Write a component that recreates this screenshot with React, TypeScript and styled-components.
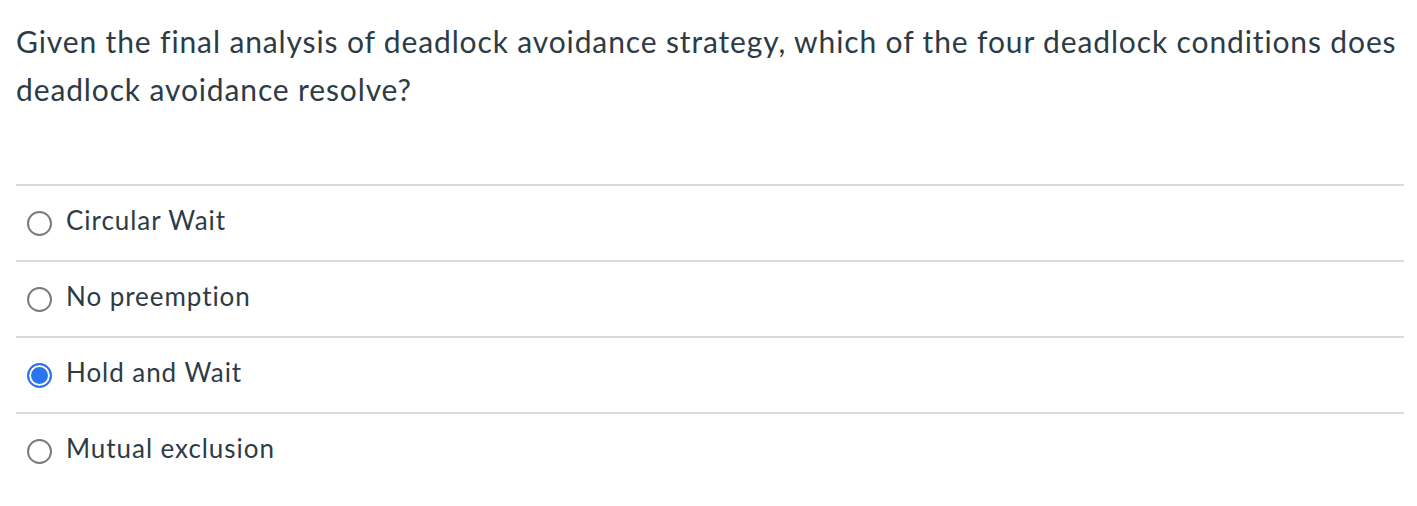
import * as React from "react";
import styled, { createGlobalStyle } from "styled-components";

const GlobalStyle = createGlobalStyle`
  html, body {
    margin: 0;
    padding: 0;
    background: #ffffff;
  }
  body {
    font-family: Lato, "Noto Sans", "Liberation Sans", sans-serif;
    color: #2d3b45;
  }
`;

const Quiz = styled.div`
  padding: 17px 13px 0 16px;
`;

const Question = styled.p`
  margin: 0 0 71px 0;
  font-size: 30px;
  line-height: 48px;
  letter-spacing: 0.87px;
`;

const Answers = styled.div`
  display: flex;
  flex-direction: column;
`;

const Answer = styled.label`
  display: flex;
  align-items: center;
  gap: 14px;
  height: 76px;
  padding: 0 0 6px 11px;
  box-sizing: border-box;
  border-top: 2px solid #dadada;
  font-size: 26px;
  letter-spacing: 0.95px;
  cursor: pointer;
`;

const Radio = styled.span<{ $checked: boolean }>`
  box-sizing: border-box;
  flex: none;
  width: 25px;
  height: 25px;
  margin-top: 6px;
  border-radius: 50%;
  border: 2px solid ${(p) => (p.$checked ? "#2b74f0" : "#7a7a7a")};
  background: ${(p) => (p.$checked ? "#2b74f0" : "#ffffff")};
  box-shadow: ${(p) => (p.$checked ? "inset 0 0 0 2px #ffffff" : "none")};
`;

const options = [
  "Circular Wait",
  "No preemption",
  "Hold and Wait",
  "Mutual exclusion",
];

export default function App() {
  const [selected, setSelected] = React.useState(2);

  return (
    <>
      <GlobalStyle />
      <Quiz>
        <Question>
          Given the final analysis of deadlock avoidance strategy, which of the
          four deadlock conditions does deadlock avoidance resolve?
        </Question>
        <Answers>
          {options.map((text, i) => (
            <Answer key={text} onClick={() => setSelected(i)}>
              <Radio $checked={selected === i} />
              {text}
            </Answer>
          ))}
        </Answers>
      </Quiz>
    </>
  );
}
